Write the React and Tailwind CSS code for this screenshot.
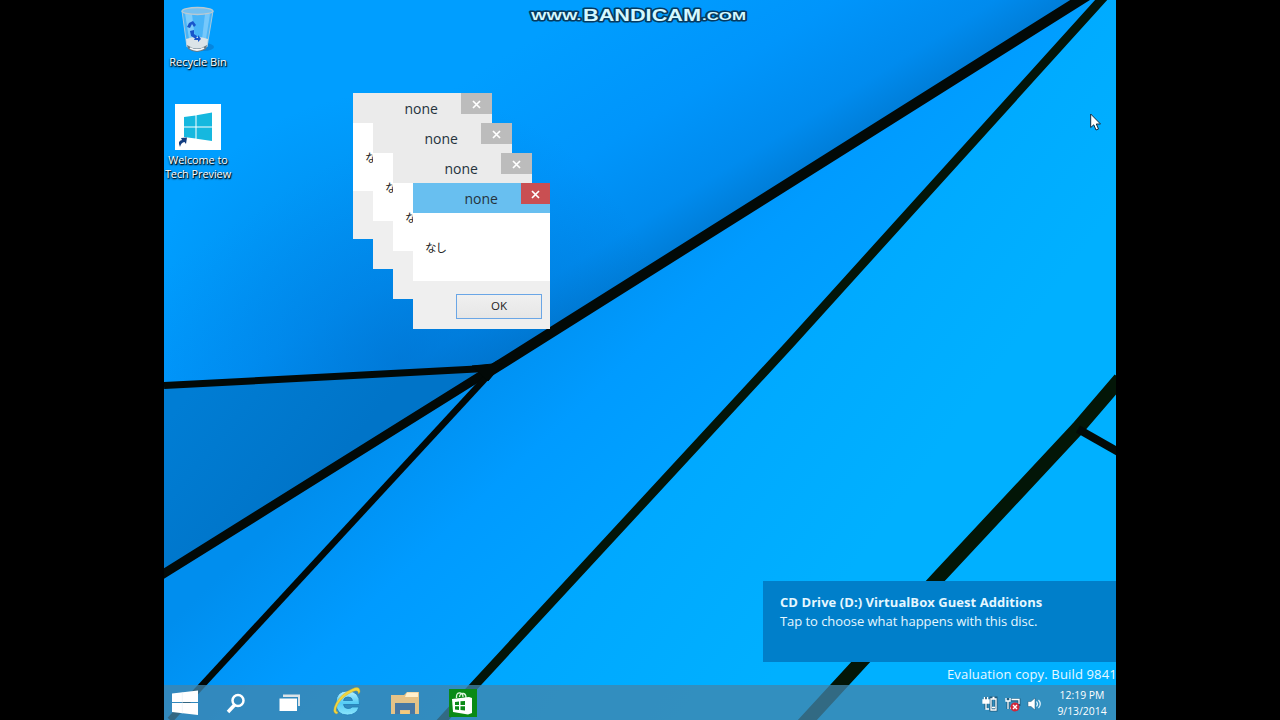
const UI = "font-['Open_Sans','Noto_Sans_CJK_JP',sans-serif]";

function Wallpaper() {
  return (
    <svg className="absolute inset-0" width="952" height="720" viewBox="164 0 952 720">
      <defs>
        <linearGradient id="upper" gradientUnits="userSpaceOnUse" x1="357" y1="147" x2="495" y2="368">
          <stop offset="0" stopColor="#009eff" />
          <stop offset="0.5" stopColor="#0095fb" />
          <stop offset="0.82" stopColor="#008bee" />
          <stop offset="1" stopColor="#007cd6" />
        </linearGradient>
        <radialGradient id="shade" gradientUnits="userSpaceOnUse" cx="400" cy="360" r="270">
          <stop offset="0" stopColor="#0060b8" stopOpacity=".42" />
          <stop offset="1" stopColor="#0060b8" stopOpacity="0" />
        </radialGradient>
        <linearGradient id="wedge" gradientUnits="userSpaceOnUse" x1="200" y1="380" x2="320" y2="480">
          <stop offset="0" stopColor="#007dd4" />
          <stop offset="1" stopColor="#0074c8" />
        </linearGradient>
        <linearGradient id="middle" gradientUnits="userSpaceOnUse" x1="300" y1="500" x2="470" y2="680">
          <stop offset="0" stopColor="#008eee" />
          <stop offset="0.5" stopColor="#009bff" />
          <stop offset="1" stopColor="#00a2ff" />
        </linearGradient>
        <linearGradient id="right" gradientUnits="userSpaceOnUse" x1="640" y1="400" x2="860" y2="560">
          <stop offset="0" stopColor="#00a6ff" />
          <stop offset="1" stopColor="#00b0ff" />
        </linearGradient>
      </defs>
      <rect x="164" y="0" width="952" height="720" fill="url(#right)" />
      <path d="M164 0H1080L495 368L164 385Z" fill="url(#upper)" />
      <path d="M164 0H1080L495 368L164 385Z" fill="url(#shade)" />
      <path d="M164 385L495 368L164 573Z" fill="url(#wedge)" />
      <path d="M164 573L495 368L1080 0H1104L450 720H164Z" fill="url(#middle)" />
      <g stroke="#020907" fill="none">
        <path d="M164 385.5L495 368" strokeWidth="7" />
        <path d="M160 576L482 375L500 364" strokeWidth="9" />
        <path d="M490 371L560 327L1096 -10" strokeWidth="10.5" />
        <path d="M494 369L170 720" strokeWidth="6.500" />
        <path d="M1112 -12L790 344L450 712L430 734" strokeWidth="9" stroke="#031509" />
        <path d="M1120 379L1078 428L938 578L800 728" strokeWidth="14" stroke="#031607" strokeLinejoin="round" />
        <path d="M1078 429L1120 453" strokeWidth="8" />
        <path d="M472 366L503 363L488 381Z" fill="#020907" strokeWidth="1" />
      </g>
    </svg>
  );
}

function RecycleBin() {
  return (
    <svg width="36" height="48" viewBox="0 0 36 48">
      <ellipse cx="24" cy="42" rx="10" ry="4" fill="#0874c8" opacity=".6" />
      <path d="M2 6L7 41Q17 48 27 41L33 6Z" fill="#66bdf5" fillOpacity=".7" />
      <path d="M5 8L9 34H15L12 9Z" fill="#bde8ff" opacity=".45" />
      <path d="M25 9L22 34H26L30 9Z" fill="#b0e0ff" opacity=".45" />
      <path d="M2 6L7 42M33 6L27 42" stroke="#a9cadd" strokeWidth="1" />
      <path d="M6 34Q17 30 28 34L27 42Q17 49 7 42Z" fill="#dbe4e8" />
      <path d="M7 40Q17 47 27 40L26 44Q17 50 8 44Z" fill="#667b88" />
      <path d="M10 43Q17 47 24 43" stroke="#f5f5f5" strokeWidth="2" fill="none" />
      <ellipse cx="17.500" cy="6" rx="15.500" ry="3.500" fill="#75c0f0" stroke="#bac9d1" strokeWidth="1.300" />
      <path d="M9 18l4-2 3 4-2 2-2-3-2 4-3-1zM10 26l4-1v4l3 2-1 3-5-3zM15 33h3v-3l3 4-3 3v-2h-4z" fill="#1855cb" />
    </svg>
  );
}

function WelcomeTile() {
  return (
    <svg width="46" height="46" viewBox="0 0 46 46">
      <rect width="46" height="46" fill="#fff" />
      <path d="M9 13L20.500 11.500V22.500H9ZM21.500 11.300L37 8.500V22.500H21.500ZM9 23.500H20.500V34.500L9 33ZM21.500 23.500H37V37L21.500 34.700Z" fill="#16b8df" />
      <path d="M5 43Q2 37 7 36L6 34L12 33.500L11 40L9.500 38Q6 38.500 5 43Z" fill="#123c80" />
    </svg>
  );
}

function Shortcut({ children, className }) {
  return (
    <div className={`absolute flex flex-col items-center text-center text-[11px] leading-[14px] whitespace-nowrap text-white [text-shadow:0_1px_2px_#000,1px_1px_1px_#000] ${className}`}>
      {children}
    </div>
  );
}

function Dialog({ active, className }) {
  return (
    <section className={`absolute flex h-[146px] flex-col bg-[#efefef] ${active ? "w-[137px]" : "w-[139px]"} ${className}`}>
      <header className={`relative flex h-[30px] shrink-0 items-center text-[14px] text-[#25333d] ${active ? "bg-[#68bff0]" : "bg-[#ebebeb]"}`}>
        <span className="ml-[51.5px]">none</span>
        <button className={`absolute top-0 right-0 flex h-[21px] items-center justify-center pt-px ${active ? "w-[29px] bg-[#c94f52]" : "w-[31px] bg-[#bcbcbc]"}`}>
          <svg width="9" height="9" viewBox="0 0 9 9" stroke="#fff" strokeWidth="1.700">
            <path d="M1 1L8 8M8 1L1 8" />
          </svg>
        </button>
      </header>
      <div className="flex h-[68px] shrink-0 items-center bg-white pl-3 pt-px font-['Noto_Sans_CJK_JP',sans-serif] text-[11.5px] tracking-[-1px] text-[#202020]">なし</div>
      <footer className="flex flex-1 items-start justify-end pt-[13px] pr-2">
        <button className="flex h-[25px] w-[86px] items-center justify-center border border-[#6aa6e6] bg-linear-to-b from-[#f0f0f0] to-[#e6e6e6] pb-[2px] text-[11.5px] text-[#222]">OK</button>
      </footer>
    </section>
  );
}

function StartIcon() {
  return (
    <svg width="28" height="26" viewBox="0 0 28 26" fill="#fff">
      <path d="M1 3.500L27 .5V12H1ZM1 13H27V25L1 22Z" />
      <path d="M11.300 2V23.500" stroke="#dcebf3" strokeWidth=".5" />
    </svg>
  );
}

function SearchIcon() {
  return (
    <svg width="20" height="22" viewBox="0 0 20 22" fill="none" stroke="#fff">
      <circle cx="12" cy="8.500" r="5.500" strokeWidth="2.500" />
      <path d="M8.500 13L2 20" strokeWidth="3.500" />
    </svg>
  );
}

function TaskViewIcon() {
  return (
    <svg width="22" height="18" viewBox="0 0 22 18">
      <path d="M4 .5H21V12H19V3H4Z" fill="#dce3e7" />
      <path d="M.5 4.500H18V17H.5Z" fill="#fff" />
    </svg>
  );
}

function IEIcon() {
  return (
    <svg width="30" height="30" viewBox="0 0 30 30">
      <defs>
        <linearGradient id="ie" x1="0" y1="0" x2="0" y2="1">
          <stop offset="0" stopColor="#b9f2ff" />
          <stop offset=".5" stopColor="#55cbf5" />
          <stop offset="1" stopColor="#8be5fc" />
        </linearGradient>
      </defs>
      <path d="M27.500 18.500H11.500Q12 22.500 16 22.500Q19 22.500 20 21H27Q24.500 29 15.500 29Q4 29 4 17Q4 5 15.500 5Q28 5 27.500 18.500ZM11.500 14.500H20.500Q20 11 16 11Q12 11 11.500 14.500Z" fill="url(#ie)" stroke="#207bb5" strokeWidth=".8" />
      <path d="M5 28Q-1 27 4 17Q10 7 20 3Q28-1 28 6L26.500 8Q26.500 3 21 5.500Q11 10 6 18Q2 26 6 26Z" fill="#f2d63e" stroke="#c9a52a" strokeWidth=".4" />
    </svg>
  );
}

function FolderIcon() {
  return (
    <svg width="28" height="24" viewBox="0 0 28 24">
      <path d="M0 4H13L16 1H28V23H0Z" fill="#e5c388" />
      <path d="M16 1.500H27V6H14Z" fill="#fff0cd" />
      <path d="M4 12H24V23H19V19H9V23H4Z" fill="#4878a4" />
      <path d="M10 20H18V23H10Z" fill="#f3ca7c" />
    </svg>
  );
}

function StoreIcon() {
  return (
    <svg width="28" height="28" viewBox="0 0 28 28">
      <rect width="28" height="28" fill="#0a8a16" />
      <path d="M7.500 9V7Q8 3.500 11 4Q14 4.500 14 8M10.500 8Q11 4 14.500 4.500Q17 5 17 9" fill="none" stroke="#dcf5dc" strokeWidth="1.300" />
      <path d="M3 10L20 8L23 9V24L19 25.500L4 23Z" fill="#fff" />
      <path d="M6 13L10 12.500V16H6ZM11.500 12.300L16 12V16H11.500ZM6 17.300H10V21L6 20.500ZM11.500 17.300H16V21.500L11.500 21Z" fill="#0a8a16" />
    </svg>
  );
}

function TrayIcons() {
  return (
    <svg width="62" height="18" viewBox="0 0 62 18">
      <g fill="none" stroke="#163e58" strokeWidth="3" opacity=".65">
        <path d="M4 2V14M2 6H6M9 3H14V15H9ZM26 3V14M29 5H37V11" />
      </g>
      <g fill="none" stroke="#fff" strokeWidth="1.300">
        <path d="M2.500 2V5M5.500 2V5M4 8V14H7" />
        <path d="M1 5H7V8H1Z" fill="#fff" />
        <path d="M9 4H14V15H9ZM10.500 2.500H12.500M10 12.500H13" />
        <path d="M24 3V6H28V3M26 6V14M29.500 4.500H37V9M28 13H31" />
      </g>
      <circle cx="33" cy="12" r="4.500" fill="#d32738" />
      <path d="M31 10L35 14M35 10L31 14" stroke="#fff" strokeWidth="1.400" />
      <path d="M46 6.500H49L53 3V15L49 11.500H46Z" fill="#fff" stroke="#265b7b" strokeWidth=".5" />
      <path d="M54.500 6.500Q56.500 9 54.500 11.500M56.500 5Q60 9 56.500 13" fill="none" stroke="#e4f4fd" strokeWidth="1.200" />
    </svg>
  );
}

function Taskbar() {
  return (
    <nav className="absolute inset-x-0 bottom-0 flex h-[35px] items-center bg-[#4285ab]/76 text-white">
      <div className="flex flex-1 items-center pl-[7px]">
        <StartIcon />
        <div className="ml-[27px] flex"><SearchIcon /></div>
        <div className="ml-[33px] flex"><TaskViewIcon /></div>
        <div className="mb-[3px] ml-[31px] flex"><IEIcon /></div>
        <div className="ml-[29px] flex"><FolderIcon /></div>
        <div className="ml-[30px] flex"><StoreIcon /></div>
      </div>
      <div className="mr-[9px] flex pt-[2px]"><TrayIcons /></div>
      <div className="mr-[5px] w-[58px] pt-px text-center text-[10.4px] leading-[16px] whitespace-nowrap">
        <div>12:19 PM</div>
        <div>9/13/2014</div>
      </div>
    </nav>
  );
}

export default function App() {
  return (
    <div className={`flex h-[720px] w-[1280px] justify-center overflow-hidden bg-black ${UI}`}>
      <main className="relative h-[720px] w-[952px] overflow-hidden">
        <Wallpaper />
        <Shortcut className="top-[5px] left-[4px] w-[60px]">
          <RecycleBin />
          <span className="mt-[2px]">Recycle Bin</span>
        </Shortcut>
        <Shortcut className="top-[104px] -left-[1px] w-[70px]">
          <WelcomeTile />
          <span className="mt-[3px] text-[10.8px]">Welcome to<br />Tech Preview</span>
        </Shortcut>

        <svg className="absolute top-0 left-[360px]" width="230" height="30" viewBox="0 0 230 30">
          <g fill="#d4f8ff" stroke="#063b61" strokeWidth="3" paintOrder="stroke" strokeLinejoin="round" fontFamily="Liberation Sans, sans-serif" fontWeight="bold">
            <text x="7" y="20" fontSize="11.500" textLength="50" lengthAdjust="spacingAndGlyphs">WWW.</text>
            <text x="59" y="20.500" fontSize="17" textLength="118" lengthAdjust="spacingAndGlyphs">BANDICAM</text>
            <text x="178" y="20" fontSize="11.500" textLength="44" lengthAdjust="spacingAndGlyphs">.COM</text>
          </g>
        </svg>

        <Dialog className="top-[93px] left-[189px]" />
        <Dialog className="top-[123px] left-[209px]" />
        <Dialog className="top-[153px] left-[229px]" />
        <Dialog className="top-[183px] left-[249px]" active />

        <div className="absolute top-[665px] left-[783px] text-[13px] leading-[18px] tracking-[0.15px] whitespace-nowrap text-[#e8f8ff]">Evaluation copy. Build 9841</div>

        <aside className="absolute top-[581px] right-0 flex h-[81px] w-[353px] flex-col bg-[#007fca] pt-[12px] pl-[17px] text-[13px] leading-[19px] whitespace-nowrap text-[#e5f7ff]">
          <strong className="text-[13px] font-bold tracking-[0.06px]">CD Drive (D:) VirtualBox Guest Additions</strong>
          <span className="tracking-[-0.05px]">Tap to choose what happens with this disc.</span>
        </aside>

        <Taskbar />

        <svg className="absolute top-[113px] left-[926px]" width="12" height="19" viewBox="0 0 12 19">
          <path d="M.7 1V14.500L3.800 11.800L6 17L8.500 16L6.300 11H10.500Z" fill="#fff" stroke="#102c40" strokeWidth="1" />
        </svg>
      </main>
    </div>
  );
}
